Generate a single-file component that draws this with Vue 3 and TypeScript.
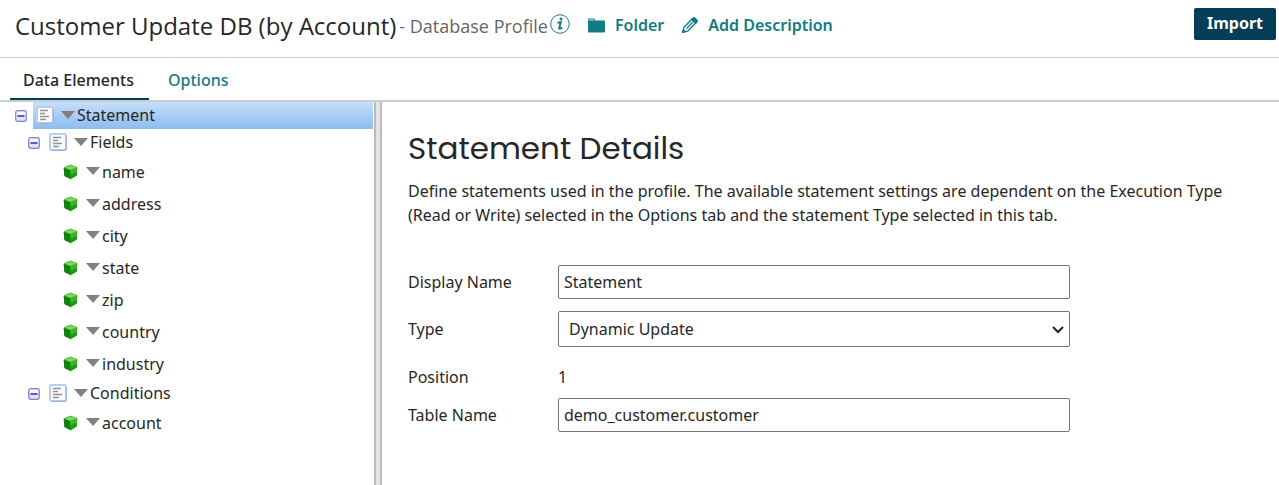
<script setup lang="ts">
import { ref } from 'vue'

interface TreeNode {
  label: string
  children?: TreeNode[]
}

interface TreeRow {
  label: string
  level: number
  leaf: boolean
}

const root: TreeNode = {
  label: 'Statement',
  children: [
    {
      label: 'Fields',
      children: ['name', 'address', 'city', 'state', 'zip', 'country', 'industry'].map((label) => ({ label })),
    },
    { label: 'Conditions', children: [{ label: 'account' }] },
  ],
}

const collapsed = ref<string[]>([])
const selected = ref('Statement')
const activeTab = ref('Data Elements')
const tabs = ['Data Elements', 'Options']
const displayName = ref('Statement')
const statementType = ref('Dynamic Update')
const statementTypes = ['Dynamic Update', 'Dynamic Insert', 'Dynamic Delete', 'Standard Insert/Update/Delete', 'Stored Procedure']
const tableName = ref('demo_customer.customer')

function flatten(node: TreeNode, level = 0): TreeRow[] {
  const row = { label: node.label, level, leaf: !node.children }
  if (!node.children || collapsed.value.includes(node.label)) return [row]
  return [row, ...node.children.flatMap((child) => flatten(child, level + 1))]
}

function toggle(label: string) {
  collapsed.value = collapsed.value.includes(label)
    ? collapsed.value.filter((item) => item !== label)
    : [...collapsed.value, label]
}
</script>

<template>
  <div class="page">
    <header class="header">
      <h1 class="title">Customer Update DB (by Account)</h1>
      <span class="kind">- Database Profile</span>
      <button class="icon-button info" aria-label="Information">
        <svg width="20" height="20" viewBox="0 0 20 20" fill="none" stroke="#127b86">
          <circle cx="10" cy="10" r="9.3" />
          <circle cx="11" cy="5" r="1.5" fill="#127b86" stroke="none" />
          <path d="M7.5 8.7 10.8 8.2 9.2 14Q9 15.6 12.2 13.6" stroke-width="2" />
        </svg>
      </button>
      <a class="action folder" href="#">
        <svg width="17" height="15" viewBox="0 0 17 15">
          <path d="M0 1.5Q0 .5 1 .5H6Q7 .5 7 1.5V2.5H0Z" fill="#127b86" />
          <path d="M1 1.5H6V2.5H1Z" fill="#fff" />
          <path d="M0 2.5H16Q17 2.5 17 3.5V13.5Q17 14.5 16 14.5H1Q0 14.5 0 13.5Z" fill="#127b86" />
        </svg>
        <span>Folder</span>
      </a>
      <a class="action describe" href="#">
        <svg width="16" height="16" viewBox="0 0 17 17" fill="none" stroke="#127b86" stroke-width="1.4" stroke-linejoin="round">
          <path d="M1 16 2.1 10.8 10.8 2.1 14.9 6.2 6.2 14.9Z" />
          <path d="M10.3 2.6 12.2.8Q12.8.3 13.4.9L16.1 3.6Q16.7 4.2 16.1 4.8L14.4 6.7Z" fill="#127b86" />
          <path d="M4.8 12.2 11.4 5.6" />
          <path d="M.8 16.2 1.4 13.6 3.4 15.6Z" fill="#127b86" />
        </svg>
        <span>Add Description</span>
      </a>
      <button class="import">Import</button>
    </header>

    <nav class="tabs" role="tablist">
      <button
        v-for="tab in tabs"
        :key="tab"
        class="tab"
        :class="{ active: activeTab === tab }"
        role="tab"
        :aria-selected="activeTab === tab"
        @click="activeTab = tab"
      >{{ tab }}</button>
    </nav>

    <div class="workspace">
      <ul class="tree" role="tree" aria-label="Data elements">
        <li
          v-for="row in flatten(root)"
          :key="row.label"
          class="row"
          :class="[row.leaf ? 'leaf' : 'level-' + row.level]"
          role="treeitem"
          :aria-selected="selected === row.label"
        >
          <button v-if="!row.leaf" class="icon-button toggle" :aria-label="'Toggle ' + row.label" @click="toggle(row.label)">
            <svg width="12" height="12" viewBox="0 0 12 12">
              <rect x=".7" y=".7" width="10.6" height="10.6" rx="2" fill="#e2e2f2" stroke="#8585c6" stroke-width="1.2" />
              <path d="M2 2H10V5H2Z" fill="#f8f8ff" />
              <path d="M2.5 6H9.5" stroke="#2020c4" stroke-width="1.4" />
              <path v-if="collapsed.includes(row.label)" d="M6 2.5V9.5" stroke="#2020c4" stroke-width="1.4" />
            </svg>
          </button>
          <div class="node" :class="{ selected: selected === row.label }" @click="selected = row.label">
            <svg v-if="row.leaf" class="cube" width="15" height="16" viewBox="0 0 15 16">
              <path d="M1.2 3.6 7.5 1.2 13.8 3.4 13.3 11.3 7.8 14.8 1.8 11.8Z" fill="#2a9c22" stroke="#2a9c22" stroke-linejoin="round" />
              <path d="M1.2 3.6 7.5 1.2 13.8 3.4 7.2 6Z" fill="#7fd858" />
              <path d="M.8 3.9 7.2 6.2 7.8 15.1 1.5 12Z" fill="#117f12" />
              <path d="M7.2 6.2 14.2 3.6 13.7 11.3 7.8 15.1Z" fill="#38b825" />
              <path d="M7.5 10.5 13.9 7.8 13.7 11.3 7.8 15.1Z" fill="#1f9c17" />
            </svg>
            <svg v-else class="document" width="18" height="18" viewBox="0 0 18 18">
              <rect x="1" y="1" width="16" height="16" rx="2" fill="#fbfcff" stroke="#b4d0f2" stroke-width="2" />
              <path d="M17.3 2.5V15.5Q17.3 17.3 15.5 17.3H2.5" fill="none" stroke="#a3afe0" stroke-width="1.2" />
              <path d="M4 4.5H12M4 7.5H9M4 10.5H13M4 13.5H10" stroke="#929292" stroke-width="1.3" />
            </svg>
            <svg class="arrow" width="14" height="8" viewBox="0 0 14 8"><path d="M0 0H14L7 8Z" fill="#808080" /></svg>
            <span>{{ row.label }}</span>
          </div>
        </li>
      </ul>
      <div class="splitter" role="separator" aria-orientation="vertical"></div>
      <main class="details">
        <h2 class="heading">Statement Details</h2>
        <p class="description">
          Define statements used in the profile. The available statement settings are dependent on the Execution Type
          (Read or Write) selected in the Options tab and the statement Type selected in this tab.
        </p>
        <form class="form" @submit.prevent>
          <div class="field">
            <label for="display-name">Display Name</label>
            <input id="display-name" v-model="displayName" type="text" />
          </div>
          <div class="field">
            <label for="statement-type">Type</label>
            <div class="select-box">
              <select id="statement-type" v-model="statementType">
                <option v-for="option in statementTypes" :key="option">{{ option }}</option>
              </select>
              <svg class="chevron" width="12" height="8" viewBox="0 0 12 8" fill="none" stroke="#222" stroke-width="2">
                <path d="M1 1 6 6 11 1" />
              </svg>
            </div>
          </div>
          <div class="field position">
            <span>Position</span>
            <output>1</output>
          </div>
          <div class="field">
            <label for="table-name">Table Name</label>
            <input id="table-name" v-model="tableName" type="text" />
          </div>
        </form>
      </main>
    </div>
  </div>
</template>

<style>
body {
  margin: 0;
  background: #fff;
}
</style>

<style scoped>
* {
  box-sizing: border-box;
}
.page {
  display: flex;
  flex-direction: column;
  min-height: 100vh;
  font-family: "Noto Sans", "Open Sans", sans-serif;
  font-size: 16px;
  line-height: 24px;
  color: #272727;
}
button,
input,
select {
  font: inherit;
  color: inherit;
}
svg {
  display: block;
  flex: none;
}
.icon-button {
  padding: 0;
  border: 0;
  background: none;
  cursor: pointer;
}
.header {
  display: flex;
  align-items: flex-start;
  height: 58px;
  padding: 8px 3px 0 15px;
  border-bottom: 1px solid #ccc;
  white-space: nowrap;
}
.title {
  margin: 0;
  font-family: "Open Sans", "Noto Sans", sans-serif;
  font-size: 24px;
  font-weight: 400;
  line-height: 36px;
}
.kind {
  margin-left: 3px;
  color: #666;
  font-family: "Open Sans", "Noto Sans", sans-serif;
  font-size: 18px;
  line-height: 36px;
}
.info {
  margin: 6px 0 0 2px;
}
.action {
  display: flex;
  align-items: center;
  margin-top: 5px;
  color: #127b86;
  font-weight: 600;
  text-decoration: none;
}
.folder {
  gap: 10px;
  margin-left: 18px;
}
.describe {
  gap: 10px;
  margin-left: 18px;
}
.import {
  width: 82px;
  height: 32px;
  margin-left: auto;
  padding: 0 0 2px;
  border: 0;
  border-radius: 2px;
  background: #033d58;
  color: #fff;
  font-weight: 700;
}
.tabs {
  display: flex;
  gap: 6px;
  height: 44px;
  padding-left: 10px;
  border-bottom: 2px solid #ccc;
}
.tab {
  padding: 4px 15px 0 13px;
  border: 0;
  border-bottom: 2px solid transparent;
  background: none;
  color: #127b86;
  font-weight: 500;
}
.tab.active {
  border-color: #033d58;
  color: #272727;
}
.workspace {
  display: flex;
  flex: 1;
}
.tree {
  flex: 0 0 374px;
  margin: 0;
  padding: 0 1px 0 0;
  list-style: none;
}
.row {
  display: flex;
  align-items: center;
  height: 27px;
}
.level-0 {
  padding-left: 15px;
}
.level-1 {
  padding-left: 28px;
}
.leaf {
  height: 32px;
  padding-left: 60px;
}
.toggle {
  margin-right: 6px;
}
.node {
  display: flex;
  flex: 1;
  align-items: center;
  height: 100%;
  padding: 0 0 1px 3px;
}
.leaf .node {
  padding-bottom: 0;
}
.node.selected {
  background: linear-gradient(#c5dffb, #8dbcee);
}
.document {
  margin-right: 7px;
}
.cube {
  margin-right: 8px;
}
.arrow {
  margin-right: 2px;
}
.leaf .arrow {
  margin-bottom: 3px;
}
.splitter {
  flex: 0 0 8px;
  border: solid #bbb;
  border-width: 0 2px;
  background: #e3e3e3;
}
.details {
  flex: 1;
  padding: 22px 26px 0;
}
.heading {
  margin: 0 0 7px;
  font-family: Poppins, "Noto Sans", sans-serif;
  font-size: 31px;
  font-weight: 400;
  line-height: 48px;
}
.description {
  max-width: 840px;
  margin: 0 0 38px;
}
.field {
  display: grid;
  grid-template-columns: 150px minmax(0, 512px);
  align-items: center;
  margin-bottom: 12px;
}
.field.position {
  margin: 18px 0 9px;
}
.field input,
.field select {
  width: 100%;
  height: 34px;
  padding: 0 5px;
  border: 1px solid #767676;
  border-radius: 2px;
  background: #fff;
}
.select-box {
  position: relative;
}
.field select {
  display: block;
  height: 36px;
  padding: 0 30px 0 10px;
  appearance: none;
}
.chevron {
  position: absolute;
  top: 15px;
  right: 6px;
  pointer-events: none;
}
</style>
